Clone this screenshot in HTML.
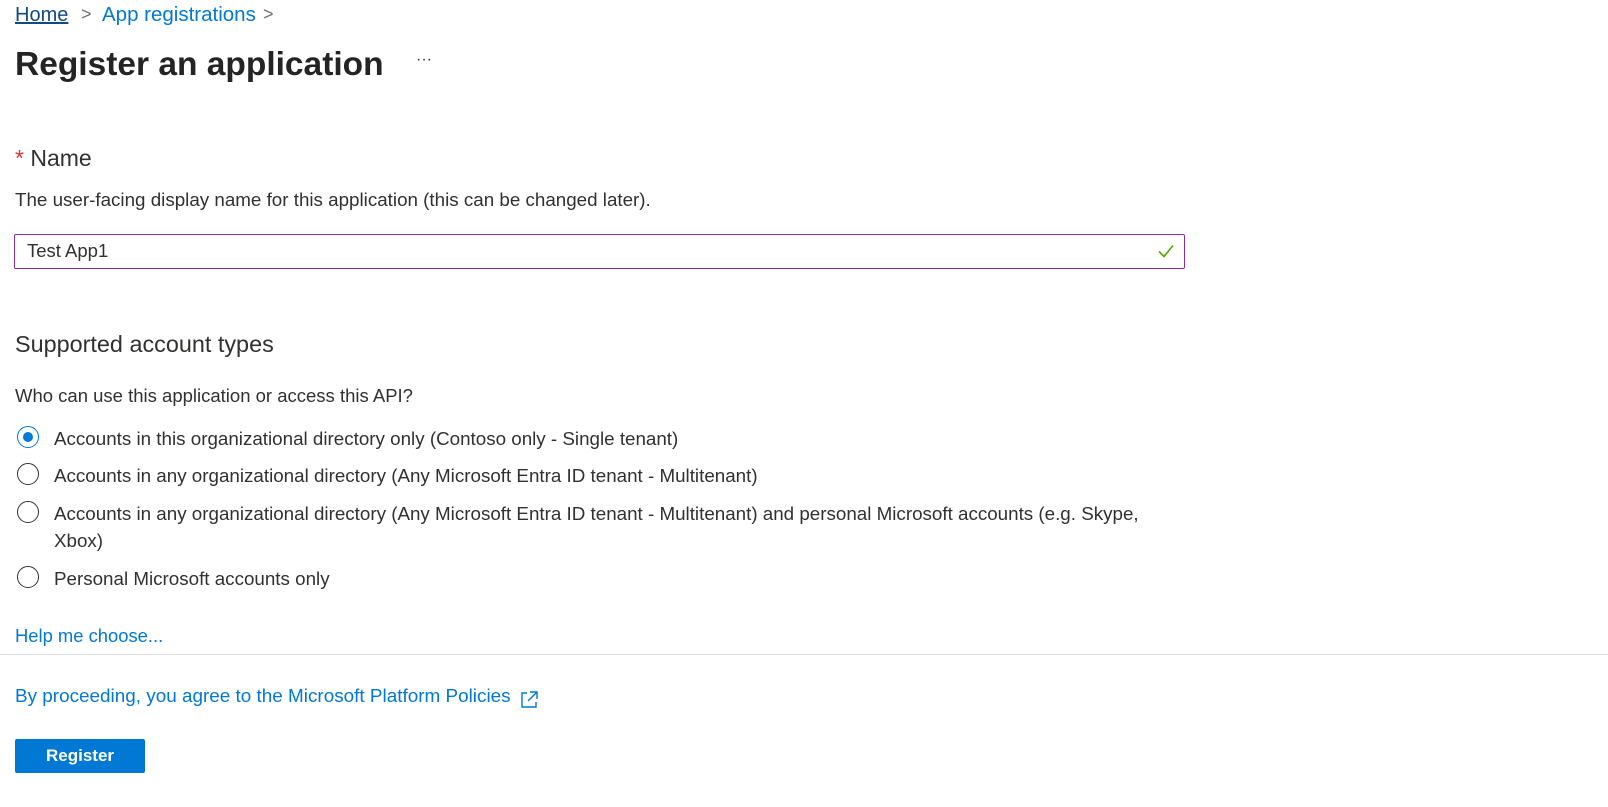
<!DOCTYPE html>
<html><head><style>
body{margin:0;background:#fff;font-family:"Liberation Sans",sans-serif;color:#323130;width:1608px;height:807px;overflow:hidden;position:relative}
.a{position:absolute;white-space:nowrap}
.radio{position:absolute;left:17px;width:22px;height:22px;border:1.5px solid #323130;border-radius:50%;box-sizing:border-box}
.rt{position:absolute;left:54px;font-size:18.8px;color:#323130}
</style></head><body>
<div class="a" style="left:15px;top:4px;font-size:20px;color:#0f4a85;text-decoration:underline">Home</div>
<div class="a" style="left:81px;top:4px;font-size:18px;color:#707070">&gt;</div>
<div class="a" style="left:102px;top:3px;font-size:20.5px;color:#0078d4">App registrations</div>
<div class="a" style="left:263px;top:4px;font-size:18px;color:#707070">&gt;</div>
<div class="a" style="left:15px;top:46px;font-size:33.5px;font-weight:600;color:#242424">Register an application</div>
<div class="a" style="left:416px;top:51px;font-size:16px;color:#323130">···</div>
<div class="a" style="left:15px;top:145px;font-size:23px"><span style="color:#d13438">*</span> Name</div>
<div class="a" style="left:15px;top:189px;font-size:18.8px">The user-facing display name for this application (this can be changed later).</div>
<div class="a" style="left:14px;top:234px;width:1171px;height:35px;border:1px solid #8a2da5;box-sizing:border-box;border-radius:2px"></div>
<div class="a" style="left:27px;top:240px;font-size:18.5px">Test App1</div>
<svg class="a" style="left:1157px;top:243px" width="18" height="16" viewBox="0 0 18 16"><path d="M2 8.5l5 5L16 2.5" fill="none" stroke="#57a300" stroke-width="1.6"/></svg>
<div class="a" style="left:15px;top:331px;font-size:23.4px">Supported account types</div>
<div class="a" style="left:15px;top:385px;font-size:18.5px">Who can use this application or access this API?</div>
<div class="radio" style="top:426px;border-color:#0078d4"><div style="position:absolute;left:4.5px;top:4.5px;width:10px;height:10px;border-radius:50%;background:#0078d4"></div></div>
<div class="rt a" style="top:428px">Accounts in this organizational directory only (Contoso only - Single tenant)</div>
<div class="radio" style="top:463px"></div>
<div class="rt a" style="top:465px">Accounts in any organizational directory (Any Microsoft Entra ID tenant - Multitenant)</div>
<div class="radio" style="top:501px"></div>
<div class="rt a" style="top:503px">Accounts in any organizational directory (Any Microsoft Entra ID tenant - Multitenant) and personal Microsoft accounts (e.g. Skype,</div>
<div class="rt a" style="top:530px">Xbox)</div>
<div class="radio" style="top:566px"></div>
<div class="rt a" style="top:568px">Personal Microsoft accounts only</div>
<div class="a" style="left:15px;top:625px;font-size:18.4px;color:#0078d4">Help me choose...</div>
<div class="a" style="left:0;top:654px;width:1608px;height:1px;background:#e1dfdd"></div>
<div class="a" style="left:15px;top:686px;font-size:18.9px;color:#0078d4">By proceeding, you agree to the Microsoft Platform Policies</div>
<svg class="a" style="left:519px;top:689px" width="21" height="21" viewBox="0 0 21 21"><path d="M8 4H3v14h14v-5M11 3h7v7M18 3L9 12" fill="none" stroke="#0078d4" stroke-width="1.4"/></svg>
<div class="a" style="left:15px;top:739px;width:130px;height:34px;background:#0078d4;border-radius:2px;color:#fff;font-weight:700;font-size:17px;text-align:center;line-height:34px">Register</div>
</body></html>
